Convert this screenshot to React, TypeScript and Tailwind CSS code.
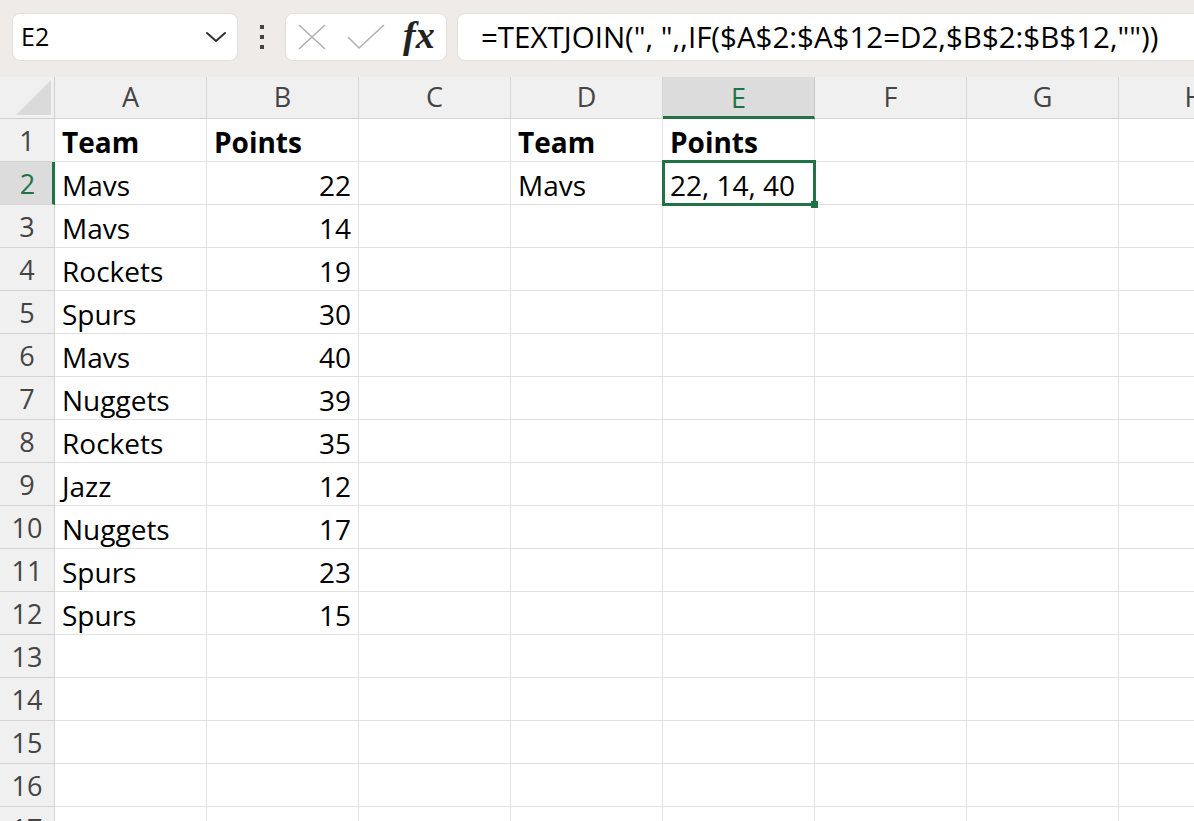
import React from 'react'

const cols = ['A', 'B', 'C', 'D', 'E', 'F', 'G', 'H']

type Cell = { v: string; bold?: boolean; right?: boolean }

const data: Record<number, Record<string, Cell>> = {
  1: { A: { v: 'Team', bold: true }, B: { v: 'Points', bold: true }, D: { v: 'Team', bold: true }, E: { v: 'Points', bold: true } },
  2: { A: { v: 'Mavs' }, B: { v: '22', right: true }, D: { v: 'Mavs' }, E: { v: '22, 14, 40' } },
  3: { A: { v: 'Mavs' }, B: { v: '14', right: true } },
  4: { A: { v: 'Rockets' }, B: { v: '19', right: true } },
  5: { A: { v: 'Spurs' }, B: { v: '30', right: true } },
  6: { A: { v: 'Mavs' }, B: { v: '40', right: true } },
  7: { A: { v: 'Nuggets' }, B: { v: '39', right: true } },
  8: { A: { v: 'Rockets' }, B: { v: '35', right: true } },
  9: { A: { v: 'Jazz' }, B: { v: '12', right: true } },
  10: { A: { v: 'Nuggets' }, B: { v: '17', right: true } },
  11: { A: { v: 'Spurs' }, B: { v: '23', right: true } },
  12: { A: { v: 'Spurs' }, B: { v: '15', right: true } },
}

const rows = Array.from({ length: 17 }, (_, i) => i + 1)

function Toolbar() {
  return (
    <div className="h-[77px] bg-[#efebe9] flex items-start pt-[13px] pl-[12px]">
      {/* Name box */}
      <div className="w-[226px] shrink-0 h-[48px] bg-white rounded-lg border border-[#e3dfdd] flex items-center justify-between pl-[8px] pr-[10px]">
        <span className="text-[25px] text-black">E2</span>
        <svg width="22" height="14" viewBox="0 0 22 14" fill="none">
          <path d="M2 3 L11 11 L20 3" stroke="#333" strokeWidth="2" strokeLinecap="round" strokeLinejoin="round" />
        </svg>
      </div>
      {/* dots */}
      <div className="w-[47px] shrink-0 h-[48px] flex flex-col items-center justify-center gap-[6px]">
        <span className="w-[4px] h-[4px] bg-[#444]" />
        <span className="w-[4px] h-[4px] bg-[#444]" />
        <span className="w-[4px] h-[4px] bg-[#444]" />
      </div>
      {/* x / check / fx */}
      <div className="w-[162px] shrink-0 h-[48px] bg-white rounded-lg border border-[#e3dfdd] flex items-center pl-[12px]">
        <svg width="28" height="26" viewBox="0 0 28 26" fill="none">
          <path d="M1 1 L27 25 M27 1 L1 25" stroke="#b0b0b0" strokeWidth="1.6" />
        </svg>
        <svg width="38" height="26" viewBox="0 0 38 26" fill="none" className="ml-[21px]">
          <path d="M1 13 L12 24 L37 1" stroke="#b0b0b0" strokeWidth="1.6" />
        </svg>
        <span className="ml-[18px] text-[38px] italic font-bold text-[#222] leading-none pb-[4px]" style={{ fontFamily: '"Liberation Serif", serif' }}>
          fx
        </span>
      </div>
      {/* formula */}
      <div className="ml-[10px] flex-1 h-[48px] bg-white rounded-l-lg border border-r-0 border-[#e3dfdd] flex items-center pl-[23px] overflow-hidden">
        <span className="text-[29.5px] text-black whitespace-nowrap">=TEXTJOIN(", ",,IF($A$2:$A$12=D2,$B$2:$B$12,""))</span>
      </div>
    </div>
  )
}

function Corner() {
  return (
    <div className="w-[55px] shrink-0 h-[42px] bg-[#f0f0f0] border-r border-b border-[#d0d0d0] flex items-end justify-end pr-[3px] pb-[3px]">
      <svg width="35" height="35" viewBox="0 0 35 35">
        <polygon points="35,0 35,35 0,35" fill="#dadada" />
      </svg>
    </div>
  )
}

export default function App() {
  return (
    <div className="w-[1194px] h-[821px] overflow-hidden bg-white" style={{ fontFamily: '"Open Sans", "Noto Sans", sans-serif' }}>
      <Toolbar />
      <div className="flex">
        <Corner />
        {cols.map((c) => {
          const sel = c === 'E'
          return (
            <div
              key={c}
              className={
                sel
                  ? 'w-[152px] shrink-0 h-[42px] bg-[#dcdcdc] border-r border-[#c8c8c8] border-b-[3px] border-b-[#217346] flex items-center justify-center pt-[3px] text-[27px] text-[#217346]'
                  : 'w-[152px] shrink-0 h-[42px] bg-[#f0f0f0] border-r border-b border-[#d4d4d4] flex items-center justify-center text-[27px] text-[#444]'
              }
            >
              {c}
            </div>
          )
        })}
      </div>
      {rows.map((r) => {
        const rowSel = r === 2
        return (
          <div key={r} className="flex">
            <div
              className={
                rowSel
                  ? 'w-[55px] shrink-0 h-[43px] bg-[#dcdcdc] border-r-[3px] border-r-[#217346] border-b border-b-[#d4d4d4] flex items-center justify-center pt-[3px] pl-[3px] text-[27px] text-[#217346]'
                  : 'w-[55px] shrink-0 h-[43px] bg-[#f0f0f0] border-r border-b border-[#d4d4d4] flex items-center justify-center pt-[3px] text-[27px] text-[#444]'
              }
            >
              {r}
            </div>
            {cols.map((c) => {
              const cell = data[r]?.[c]
              const active = r === 2 && c === 'E'
              return (
                <div
                  key={c}
                  className={
                    'relative w-[152px] shrink-0 h-[43px] border-r border-b border-[#e1e1e1] flex items-center px-[7px] pt-[3px] text-[28px] text-black whitespace-nowrap ' +
                    (cell?.right ? 'justify-end ' : 'justify-start ') +
                    (cell?.bold ? 'font-bold' : 'font-normal')
                  }
                >
                  {cell?.v}
                  {active && (
                    <>
                      <div className="absolute z-10 left-[-1px] top-[-2px] right-[-2px] bottom-[-2px] border-[3px] border-[#217346]" />
                      <div className="absolute z-20 right-[-4px] bottom-[-4px] w-[7px] h-[7px] bg-[#217346]" />
                    </>
                  )}
                </div>
              )
            })}
          </div>
        )
      })}
    </div>
  )
}
